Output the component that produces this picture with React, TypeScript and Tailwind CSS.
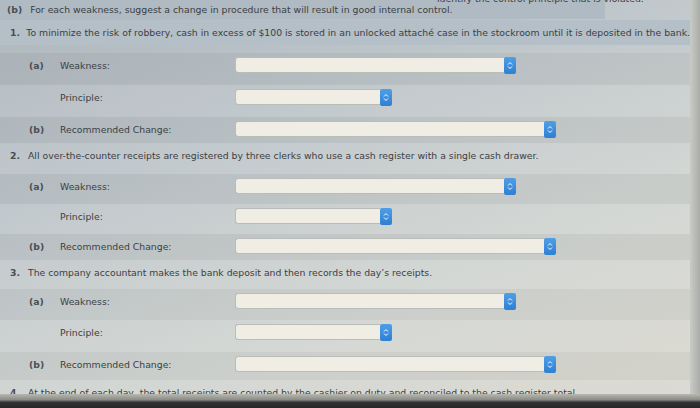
import React from "react";

function Select({ w }: { w: number }) {
  return (
    <div className="flex items-center h-[16px]" style={{ width: w }}>
      <div className="flex-1 h-[16px] rounded-l-[3px] bg-[#efede4] border border-[#b9bcb8] border-r-0" />
      <div className="w-[12px] h-[17px] rounded-[2px] bg-[linear-gradient(#4f9fe6,#2f7fd3)] flex items-center justify-center">
        <svg width="6" height="9" viewBox="0 0 6 9">
          <path d="M1 3.5 L3 1.5 L5 3.5" stroke="white" strokeWidth="1" fill="none" />
          <path d="M1 5.5 L3 7.5 L5 5.5" stroke="white" strokeWidth="1" fill="none" />
        </svg>
      </div>
    </div>
  );
}

function FieldRow({
  tag,
  label,
  w,
  h,
  stripe,
}: {
  tag?: string;
  label: string;
  w: number;
  h: number;
  stripe: string;
}) {
  return (
    <div className={stripe} style={{ height: h }}>
      <div className="flex items-center h-[24px]">
        <div className="w-[60px] pl-[29px] font-bold text-[#4a4f53]">{tag}</div>
        <div className="w-[175px]">{label}</div>
        <Select w={w} />
      </div>
    </div>
  );
}

function ItemRow({ n, text, h, cls }: { n: string; text: string; h: number; cls: string }) {
  return (
    <div className={`whitespace-nowrap ${cls}`} style={{ height: h }}>
      <div className="flex items-center h-[24px]">
        <div className="w-[28px] pl-[10px] font-bold text-[#4a4f53]">{n}</div>
        <div>{text}</div>
      </div>
    </div>
  );
}

export default function App() {
  return (
    <div
      className="relative w-[700px] h-[408px] overflow-hidden bg-[linear-gradient(160deg,#aeb7bd_0%,#c0c7cb_35%,#d1d5d2_65%,#dbd9d0_100%)] text-[9.3px] leading-[11px] text-[#3b4044]"
      style={{ fontFamily: '"DejaVu Sans", Verdana, sans-serif' }}
    >
      <div className="flex flex-col w-[690px]">
        <div className="w-[605px] h-[26px] mt-[-7px] bg-[#b0bac2] flex flex-col pl-[7px] whitespace-nowrap">
          <div className="h-[11px] pl-[430px]">identify the control principle that is violated.</div>
          <div className="h-[11px]">
            <span className="font-bold text-[#4a4f53]">(b)</span>
            <span className="ml-[8px]">For each weakness, suggest a change in procedure that will result in good internal control.</span>
          </div>
        </div>
        <div className="h-[1px]" />
        <ItemRow
          n="1."
          h={25}
          cls="bg-[#b4bfc7]"
          text="To minimize the risk of robbery, cash in excess of $100 is stored in an unlocked attaché case in the stockroom until it is deposited in the bank."
        />
        <div className="h-[8px]" />
        <FieldRow tag="(a)" label="Weakness:" w={281} h={32} stripe="bg-black/[0.04]" />
        <FieldRow label="Principle:" w={157} h={32} stripe="bg-white/[0.06]" />
        <FieldRow tag="(b)" label="Recommended Change:" w={321} h={26} stripe="bg-black/[0.04]" />
        <ItemRow
          n="2."
          h={31}
          cls="bg-white/[0.06]"
          text="All over-the-counter receipts are registered by three clerks who use a cash register with a single cash drawer."
        />
        <FieldRow tag="(a)" label="Weakness:" w={281} h={30} stripe="bg-black/[0.04]" />
        <FieldRow label="Principle:" w={157} h={30} stripe="bg-white/[0.06]" />
        <FieldRow tag="(b)" label="Recommended Change:" w={321} h={26} stripe="bg-black/[0.04]" />
        <ItemRow
          n="3."
          h={29}
          cls="bg-white/[0.06]"
          text="The company accountant makes the bank deposit and then records the day’s receipts."
        />
        <FieldRow tag="(a)" label="Weakness:" w={281} h={31} stripe="bg-black/[0.03]" />
        <FieldRow label="Principle:" w={157} h={32} stripe="bg-white/[0.06]" />
        <FieldRow tag="(b)" label="Recommended Change:" w={321} h={28} stripe="bg-black/[0.03]" />
        <ItemRow
          n="4."
          h={24}
          cls="bg-white/[0.05]"
          text="At the end of each day, the total receipts are counted by the cashier on duty and reconciled to the cash register total."
        />
      </div>
      <div className="absolute top-0 right-0 w-[10px] h-full bg-[linear-gradient(90deg,#c9cbc6,#a9aca8)]" />
      <div className="absolute left-0 bottom-0 w-full h-[14px] bg-[linear-gradient(#b8b8b0,#8d8d88_40%,#333333_60%,#262626)]" />
    </div>
  );
}
